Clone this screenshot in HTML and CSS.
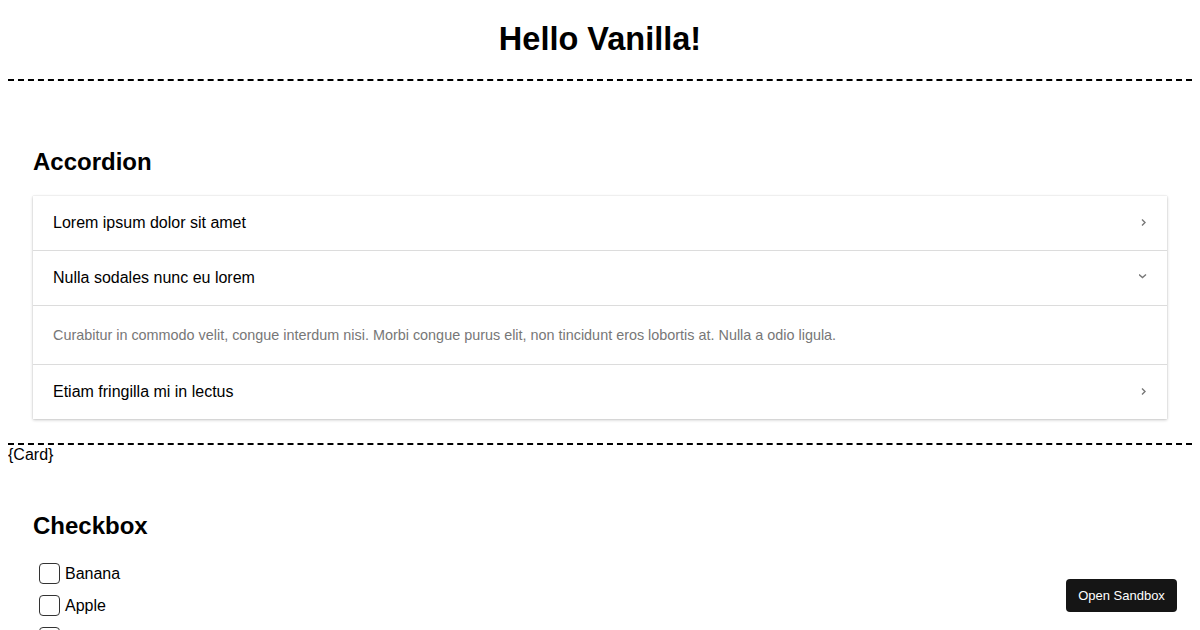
FILE: index.html
```html
<!DOCTYPE html>
<html lang="en">
<head>
<meta charset="utf-8">
<title>Hello Vanilla!</title>
<link rel="stylesheet" href="styles.css">
</head>
<body>
<h1 class="title">Hello Vanilla!</h1>

<div class="demo">
  <section class="panel panel-first">
    <h2 class="panel-title">Accordion</h2>
    <div class="accordion">
      <div class="acc-header">
        <span>Lorem ipsum dolor sit amet</span>
        <svg class="chev" viewBox="0 0 10 10" width="10" height="10"><polyline points="3,1.5 6,4.5 3,7.5"/></svg>
      </div>
      <div class="acc-header">
        <span>Nulla sodales nunc eu lorem</span>
        <svg class="chev" viewBox="0 0 10 10" width="10" height="10"><polyline points="0,1.5 3.5,4.5 7,1.5"/></svg>
      </div>
      <div class="acc-content">Curabitur in commodo velit, congue interdum nisi. Morbi congue purus elit, non tincidunt eros lobortis at. Nulla a odio ligula.</div>
      <div class="acc-header">
        <span>Etiam fringilla mi in lectus</span>
        <svg class="chev" viewBox="0 0 10 10" width="10" height="10"><polyline points="3,1.5 6,4.5 3,7.5"/></svg>
      </div>
    </div>
  </section>
</div>

<div class="demo demo-card">{Card}</div>

<section class="panel panel-check">
  <h2 class="panel-title panel-title-tight">Checkbox</h2>
  <label class="check"><span class="box"></span><span>Banana</span></label>
  <label class="check"><span class="box"></span><span>Apple</span></label>
  <label class="check"><span class="box"></span><span>Cherry</span></label>
</section>

<a class="sandbox-btn" href="#">Open Sandbox</a>
</body>
</html>
```

FILE: styles.css
```css
html, body {
  background: #fff;
}

body {
  margin: 0 8px 8px;
  font-family: "Liberation Sans", Arial, sans-serif;
  font-size: 16px;
  color: #000;
}

.title {
  font-size: 32.5px;
  font-weight: bold;
  text-align: center;
  margin: 21.2px 0;
}

.demo {
  border-top: 2px dashed #000;
}

.demo-card {
  padding-top: 1px;
}

.panel {
  padding: 27px 25px 24px;
}

.panel-first {
  padding-top: 47px;
}

.panel-check {
  padding-top: 28px;
}

.panel-title {
  font-size: 24px;
  font-weight: bold;
  margin: 19.92px 0;
}

.panel-title-tight {
  margin-bottom: 18px;
}

.accordion {
  background: #fff;
  box-shadow: 0 1px 3px rgba(0, 0, 0, 0.22), 0 0 1px rgba(0, 0, 0, 0.18);
}

.acc-header {
  display: flex;
  align-items: center;
  justify-content: space-between;
  padding: 18px 18px 18px 20px;
  line-height: 18px;
  border-top: 1px solid #dcdcdc;
}

.acc-header:first-child {
  border-top: 0;
}

.chev {
  display: block;
  fill: none;
  stroke: #777;
  stroke-width: 1.4;
}

.acc-content {
  border-top: 1px solid #dcdcdc;
  padding: 20.8px 20px;
  font-size: 14.4px;
  line-height: 16px;
  color: #777;
}

.check {
  display: flex;
  align-items: center;
}

.box {
  box-sizing: border-box;
  width: 21px;
  height: 21px;
  margin: 5px 5px 6px 6px;
  border: 1px solid #333;
  border-radius: 4px;
  background: #fff;
}

.sandbox-btn {
  position: fixed;
  right: 23px;
  bottom: 18px;
  width: 111px;
  height: 33px;
  box-sizing: border-box;
  display: flex;
  align-items: center;
  justify-content: center;
  background: #151515;
  color: #fff;
  font-size: 13px;
  text-decoration: none;
  border-radius: 4px;
}
```
